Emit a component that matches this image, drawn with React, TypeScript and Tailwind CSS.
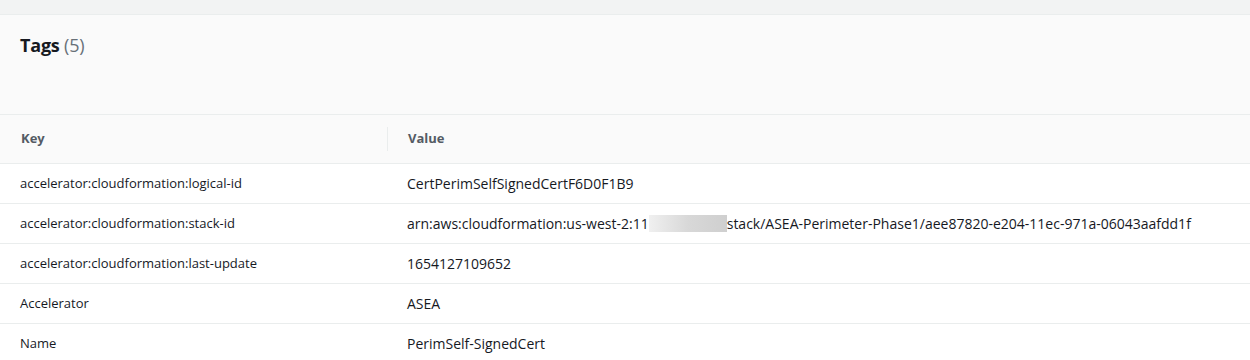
const tags = [
  { key: "accelerator:cloudformation:logical-id", value: "CertPerimSelfSignedCertF6D0F1B9" },
  { key: "accelerator:cloudformation:stack-id", value: "arn" },
  { key: "accelerator:cloudformation:last-update", value: "1654127109652" },
  { key: "Accelerator", value: "ASEA" },
  { key: "Name", value: "PerimSelf-SignedCert" },
];

// account id is blurred out in the original
function StackId() {
  return (
    <span className="flex items-center">
      <span>arn:aws:cloudformation:us-west-2:11</span>
      <span className="inline-block h-[17px] w-[78px] bg-gradient-to-r from-[#f0f0f0] via-[#d8d8d8] to-[#cfcfcf]" />
      <span>stack/ASEA-Perimeter-Phase1/aee87820-e204-11ec-971a-06043aafdd1f</span>
    </span>
  );
}

export default function App() {
  return (
    <div className="w-[1250px] h-[360px] overflow-hidden bg-white font-['Open_Sans','Noto_Sans',sans-serif] text-[13px] text-[#16191f]">
      <div className="h-[15px] bg-[#f2f3f3] border-b border-[#eaeded]" />

      <div className="h-[100px] bg-[#fafafa] border-b border-[#eaeded] px-5 pt-[17px]">
        <h2 className="text-[18px] font-bold leading-[26px] tracking-[-0.2px]">
          Tags <span className="font-normal text-[#687078]">(5)</span>
        </h2>
      </div>

      <div className="flex h-[49px] items-center bg-[#fafafa] border-b border-[#eaeded] font-bold text-[#545b64]">
        <div className="w-[387px] pl-[21px]">Key</div>
        <div className="h-[24px] w-px bg-[#eaeded]" />
        <div className="pl-5">Value</div>
      </div>

      {tags.map((tag) => (
        <div key={tag.key} className="flex h-[40px] items-center border-b border-[#eaeded]">
          <div className="w-[388px] pl-5">{tag.key}</div>
          <div className="pl-[19px] text-[14px]">{tag.value === "arn" ? <StackId /> : tag.value}</div>
        </div>
      ))}
    </div>
  );
}
